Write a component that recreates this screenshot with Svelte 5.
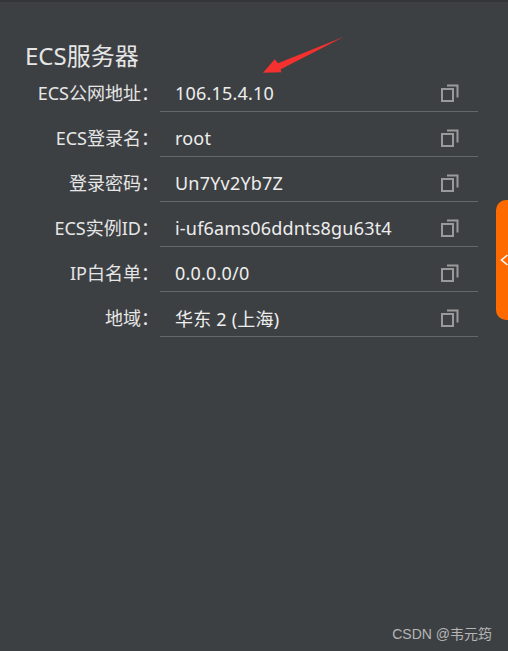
<script>
	const rows = [
		{ label: 'ECS公网地址', value: '106.15.4.10' },
		{ label: 'ECS登录名', value: 'root' },
		{ label: '登录密码', value: 'Un7Yv2Yb7Z' },
		{ label: 'ECS实例ID', value: 'i-uf6ams06ddnts8gu63t4' },
		{ label: 'IP白名单', value: '0.0.0.0/0' },
		{ label: '地域', value: '华东 2 (上海)' }
	]
</script>

<main>
	<h2>ECS服务器</h2>
	{#each rows as row}
		<div class="row">
			<div class="label">{row.label}：</div>
			<div class="field">
				<span class="value">{row.value}</span>
				<svg class="copy" width="18" height="18" viewBox="0 0 18 18" fill="none" stroke="#9a9a9a" stroke-width="2">
					<rect x="1" y="5" width="11" height="12" />
					<path d="M6 1.5h10.5v12" />
				</svg>
			</div>
		</div>
	{/each}

	<svg class="arrow" width="82" height="40" viewBox="0 0 82 40">
		<path d="M0 38.7 L11.7 25.3 L15 29.3 L81 2.7 L17.7 35.3 L18.3 38.3 Z" fill="#f5312f" />
	</svg>

	<div class="tab">
		<svg width="8" height="12" viewBox="0 0 8 12" fill="none" stroke="#fff" stroke-width="1.6">
			<path d="M7.5 1 L1.5 6 L7.5 11" />
		</svg>
	</div>

	<div class="mark">CSDN @韦元筠</div>
</main>

<style>
	:global(body) {
		margin: 0;
		background: #3d4043;
	}

	main {
		position: relative;
		box-sizing: border-box;
		height: 651px;
		padding: 41px 30px 0 0;
		border-top: 2px solid #333538;
		background: #3d4043;
		font-family: "Noto Sans", "Noto Sans CJK SC", sans-serif;
		color: #e6e6e6;
		overflow: hidden;
	}

	h2 {
		margin: 0 0 -2px 25px;
		font-size: 24px;
		font-weight: 400;
		line-height: 26px;
	}

	.row {
		display: flex;
		box-sizing: border-box;
		height: 45px;
		padding-top: 8px;
	}

	.label {
		width: 159px;
		margin-right: 1px;
		text-align: right;
		line-height: 36px;
		font-size: 18px;
		white-space: nowrap;
	}

	.field {
		flex: 1;
		display: flex;
		align-items: center;
		justify-content: space-between;
		padding: 0 19px 0 15px;
		border-bottom: 1px solid #656769;
	}

	.value {
		font-size: 18px;
		letter-spacing: 0.2px;
		color: #eeeeee;
	}

	.arrow {
		position: absolute;
		left: 263px;
		top: 32px;
	}

	.tab {
		position: absolute;
		left: 496px;
		top: 198px;
		width: 12px;
		height: 120px;
		display: flex;
		align-items: center;
		justify-content: flex-end;
		background: #ff6a00;
		border-radius: 10px 0 0 10px;
	}

	.mark {
		position: absolute;
		right: 16px;
		bottom: 8px;
		font-family: "Liberation Sans", "Noto Sans CJK SC", sans-serif;
		font-size: 14px;
		color: #b4b5b6;
	}
</style>
